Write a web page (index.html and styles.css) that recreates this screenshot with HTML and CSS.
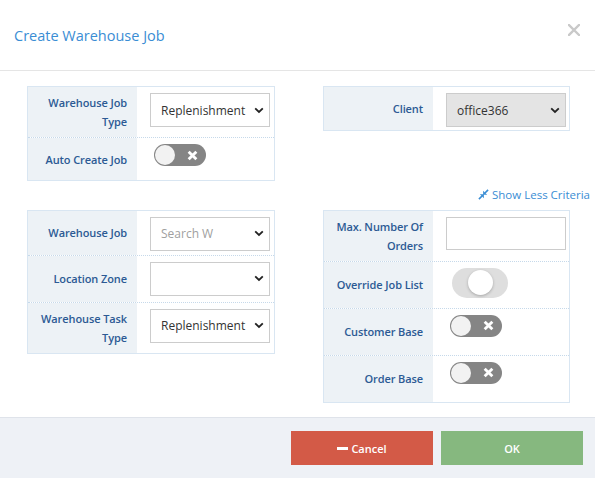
FILE: index.html
```html
<!DOCTYPE html>
<html lang="en">
<head>
<meta charset="utf-8">
<title>Create Warehouse Job</title>
<link rel="stylesheet" href="styles.css">
</head>
<body>
<div class="modal">
  <div class="header">
    <h4 class="title">Create Warehouse Job</h4>
    <svg class="close" width="12" height="12" viewBox="0 0 12 12"><path d="M1 1 L11 11 M11 1 L1 11" stroke="#c9c9c9" stroke-width="2.4" stroke-linecap="square"/></svg>
  </div>
  <div class="content">
    <div class="grid">
      <div class="panel">
        <div class="row">
          <div class="label">Warehouse Job Type</div>
          <div class="value">
            <div class="select"><span class="select-text">Replenishment</span><svg class="chev" width="10" height="7" viewBox="0 0 10 7"><path d="M1.2 1.3 L5 5 L8.8 1.3" fill="none" stroke="#222" stroke-width="1.8"/></svg></div>
          </div>
        </div>
        <div class="row">
          <div class="label">Auto Create Job</div>
          <div class="value value--short">
            <div class="toggle"><span class="knob"></span><svg width="11" height="11" viewBox="0 0 10 10"><path d="M1.5 1.5 L8.5 8.5 M8.5 1.5 L1.5 8.5" stroke="#fff" stroke-width="2.6"/></svg></div>
          </div>
        </div>
      </div>
      <div class="panel">
        <div class="row">
          <div class="label">Client</div>
          <div class="value value--tight">
            <div class="select select--disabled"><span class="select-text">office366</span><svg class="chev" width="10" height="7" viewBox="0 0 10 7"><path d="M1.2 1.3 L5 5 L8.8 1.3" fill="none" stroke="#222" stroke-width="1.8"/></svg></div>
          </div>
        </div>
      </div>
    </div>
    <div class="criteria">
      <a class="criteria-link" href="#"><svg class="compress" width="11" height="11" viewBox="0 0 12 12"><path d="M11 1 L7.6 4.4 M1 11 L4.4 7.6" stroke="#3a8dd4" stroke-width="1.8"/><path d="M5.6 2 L5.6 6.4 L10 6.4 Z M6.4 10 L6.4 5.6 L2 5.6 Z" fill="#3a8dd4"/></svg>Show Less Criteria</a>
    </div>
    <div class="grid">
      <div class="panel">
        <div class="row">
          <div class="label">Warehouse Job</div>
          <div class="value">
            <div class="select"><span class="select-text placeholder">Search W</span><svg class="chev" width="10" height="7" viewBox="0 0 10 7"><path d="M1.2 1.3 L5 5 L8.8 1.3" fill="none" stroke="#222" stroke-width="1.8"/></svg></div>
          </div>
        </div>
        <div class="row">
          <div class="label">Location Zone</div>
          <div class="value value--mid">
            <div class="select"><span class="select-text"></span><svg class="chev" width="10" height="7" viewBox="0 0 10 7"><path d="M1.2 1.3 L5 5 L8.8 1.3" fill="none" stroke="#222" stroke-width="1.8"/></svg></div>
          </div>
        </div>
        <div class="row">
          <div class="label">Warehouse Task Type</div>
          <div class="value">
            <div class="select"><span class="select-text">Replenishment</span><svg class="chev" width="10" height="7" viewBox="0 0 10 7"><path d="M1.2 1.3 L5 5 L8.8 1.3" fill="none" stroke="#222" stroke-width="1.8"/></svg></div>
          </div>
        </div>
      </div>
      <div class="panel">
        <div class="row">
          <div class="label">Max. Number Of Orders</div>
          <div class="value">
            <div class="input"></div>
          </div>
        </div>
        <div class="row">
          <div class="label">Override Job List</div>
          <div class="value value--mid">
            <div class="toggle toggle--big"><span class="knob knob--big"></span></div>
          </div>
        </div>
        <div class="row">
          <div class="label">Customer Base</div>
          <div class="value value--mid">
            <div class="toggle"><span class="knob"></span><svg width="11" height="11" viewBox="0 0 10 10"><path d="M1.5 1.5 L8.5 8.5 M8.5 1.5 L1.5 8.5" stroke="#fff" stroke-width="2.6"/></svg></div>
          </div>
        </div>
        <div class="row">
          <div class="label">Order Base</div>
          <div class="value value--mid">
            <div class="toggle"><span class="knob"></span><svg width="11" height="11" viewBox="0 0 10 10"><path d="M1.5 1.5 L8.5 8.5 M8.5 1.5 L1.5 8.5" stroke="#fff" stroke-width="2.6"/></svg></div>
          </div>
        </div>
      </div>
    </div>
  </div>
  <div class="footer">
    <button class="btn btn--cancel"><span class="minus"></span>Cancel</button>
    <button class="btn btn--ok">OK</button>
  </div>
</div>
</body>
</html>
```
FILE: styles.css
```css
* { box-sizing: border-box; }
body { margin: 0; background: #fff; font-family: "Open Sans", "Liberation Sans", sans-serif; }
.modal { width: 595px; height: 478px; display: flex; flex-direction: column; }
.header { height: 71px; border-bottom: 1px solid #e5e5e5; display: flex; align-items: center; justify-content: space-between; padding: 0 15px 0 14px; flex-shrink: 0; }
.title { margin: 0; font-size: 14.5px; font-weight: 400; color: #3a8dd4; }
.close { display: block; margin-top: -10px; }
.content { flex: 1; padding: 15px 5px 0 27px; }
.grid { display: grid; grid-template-columns: 248px 247px; column-gap: 48px; align-items: start; }
.panel { border: 1px solid #d9e6f2; background: #fff; }
.row { display: grid; grid-template-columns: 109px 1fr; border-bottom: 1px dotted #c6d9ea; }
.row:last-child { border-bottom: none; }
.label { background: #edf2f6; font-size: 11px; font-weight: 600; letter-spacing: -0.1px; color: #2c5a94; line-height: 19px; padding: 6px 10px 6px 6px; display: flex; align-items: center; justify-content: flex-end; text-align: right; }
.value { padding: 6px 4px 4px 13px; }
.value--tight { padding-bottom: 3px; }
.value--short { min-height: 42px; }
.value--mid { min-height: 46px; }
.select { height: 34px; width: 120px; border: 1px solid #cccccc; background: #fff; display: flex; align-items: center; padding: 0 5px 0 10px; }
.select--disabled { background: #e4e4e4; }
.select-text { flex: 1; font-size: 12px; color: #333; white-space: nowrap; overflow: hidden; }
.placeholder { color: #a0a0a0; }
.chev { flex-shrink: 0; margin-left: 2px; }
.input { height: 33px; width: 120px; border: 1px solid #cccccc; background: #fff; }
.toggle { width: 52px; height: 22px; border-radius: 11px; background: #858585; display: flex; align-items: center; justify-content: space-between; padding: 0 8px 0 1px; margin-left: 4px; }
.knob { width: 20px; height: 20px; border-radius: 50%; background: #f2f2f2; }
.toggle--big { width: 56px; height: 30px; border-radius: 15px; background: #dedede; justify-content: center; padding: 0; margin-left: 6px; }
.knob--big { width: 25px; height: 25px; background: #fff; box-shadow: 0 1px 3px rgba(0,0,0,0.25); }
.criteria { text-align: right; padding: 5px 0 7px; line-height: 16px; }
.criteria-link { font-size: 11.5px; color: #3a8dd4; text-decoration: none; display: inline-flex; align-items: center; gap: 3px; }
.footer { height: 61px; flex-shrink: 0; border-top: 1px solid #dfe3ea; background: #eef1f6; display: flex; justify-content: flex-end; align-items: flex-start; gap: 8px; padding: 13px 12px 0 0; }
.btn { width: 142px; height: 34px; border: none; color: #fff; font-family: "Open Sans", "Liberation Sans", sans-serif; font-size: 11px; font-weight: 600; display: flex; align-items: center; justify-content: center; gap: 3px; padding: 0; }
.btn--cancel { background: #d35a47; }
.btn--ok { background: #86b87f; }
.minus { width: 11px; height: 3px; background: #fff; display: inline-block; }
```
